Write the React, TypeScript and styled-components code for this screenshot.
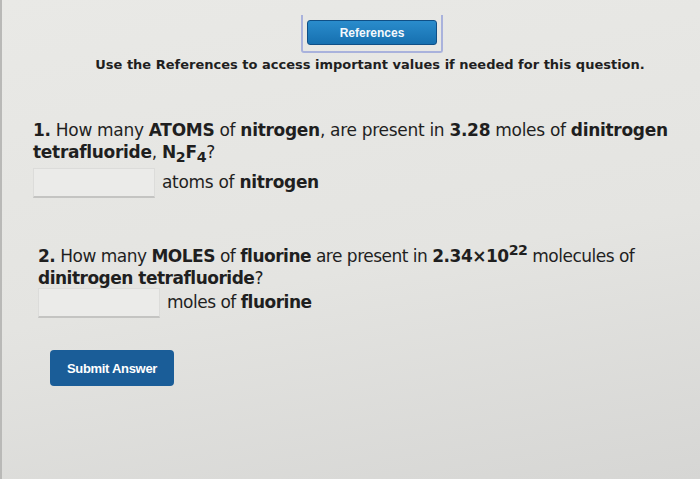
import { createGlobalStyle } from 'styled-components';
import styled from 'styled-components';

const GlobalStyle = createGlobalStyle`
  html, body {
    margin: 0;
    padding: 0;
  }
  body {
    width: 700px;
    height: 479px;
    overflow: hidden;
    background: linear-gradient(170deg, #e9e9e6 0%, #e4e4e1 55%, #d6d6d4 100%);
    font-family: "DejaVu Sans", Verdana, sans-serif;
    color: #1f1f1f;
  }
`;

const Page = styled.div`
  height: 479px;
  box-sizing: border-box;
  border-left: 2px solid #b9b9b7;
  padding: 15px 0 0 0;
`;

const TabRow = styled.div`
  display: flex;
  justify-content: center;
  padding-left: 42px;
`;

const TabFrame = styled.div`
  width: 130px;
  padding: 5px 4px 6px 4px;
  border: 2px solid #a9b2dc;
  border-top: none;
  border-radius: 0 0 3px 3px;
`;

const RefButton = styled.button`
  display: block;
  width: 100%;
  height: 25px;
  border: 1px solid #0f4f86;
  border-radius: 3px;
  background: linear-gradient(#2a8ccc, #1670b0);
  color: #f4f8fc;
  font-family: "Liberation Sans", Arial, sans-serif;
  font-weight: bold;
  font-size: 12px;
  cursor: pointer;
`;

const Note = styled.p`
  margin: 4px 0 0 0;
  text-align: center;
  font-weight: bold;
  font-size: 13px;
  padding-left: 38px;
`;

const Question = styled.div<{ $indent: number; $top: number; $tracking: number }>`
  margin-top: ${(p) => p.$top}px;
  padding-left: ${(p) => p.$indent}px;
  font-size: 17px;
  line-height: 22px;
  letter-spacing: ${(p) => p.$tracking}px;
`;

const Prompt = styled.p`
  margin: 0;
  width: 655px;
`;

const AnswerRow = styled.div<{ $gap: number }>`
  display: flex;
  align-items: center;
  gap: 7px;
  margin-top: ${(p) => p.$gap}px;
`;

const AnswerBox = styled.input`
  width: 122px;
  height: 30px;
  box-sizing: border-box;
  background: #ebebe9;
  border: 1px solid #dcdcda;
  border-bottom: 2px solid #c4c4c2;
  outline: none;
`;

const Unit = styled.span`
  margin-top: -2px;
`;

const SubmitButton = styled.button`
  margin: 32px 0 0 48px;
  width: 124px;
  height: 36px;
  border: none;
  border-radius: 4px;
  background: #1a5d98;
  color: #ffffff;
  font-family: "Liberation Sans", Arial, sans-serif;
  font-size: 13px;
  font-weight: bold;
  letter-spacing: -0.3px;
  cursor: pointer;
`;

export default function App() {
  return (
    <>
      <GlobalStyle />
      <Page>
        <TabRow>
          <TabFrame>
            <RefButton>References</RefButton>
          </TabFrame>
        </TabRow>
        <Note>Use the References to access important values if needed for this question.</Note>

        <Question $indent={31} $top={47} $tracking={-0.3}>
          <Prompt>
            <b>1.</b> How many <b>ATOMS</b> of <b>nitrogen</b>, are present in <b>3.28</b> moles of{' '}
            <b>dinitrogen tetrafluoride</b>, <b>N<sub>2</sub>F<sub>4</sub></b>?
          </Prompt>
          <AnswerRow $gap={0}>
            <AnswerBox type="text" />
            <Unit>
              atoms of <b>nitrogen</b>
            </Unit>
          </AnswerRow>
        </Question>

        <Question $indent={36} $top={41} $tracking={-0.5}>
          <Prompt>
            <b>2.</b> How many <b>MOLES</b> of <b>fluorine</b> are present in{' '}
            <b>
              2.34×10<sup>22</sup>
            </b>{' '}
            molecules of <b>dinitrogen tetrafluoride</b>?
          </Prompt>
          <AnswerRow $gap={-1}>
            <AnswerBox type="text" />
            <Unit>
              moles of <b>fluorine</b>
            </Unit>
          </AnswerRow>
        </Question>

        <SubmitButton>Submit Answer</SubmitButton>
      </Page>
    </>
  );
}
